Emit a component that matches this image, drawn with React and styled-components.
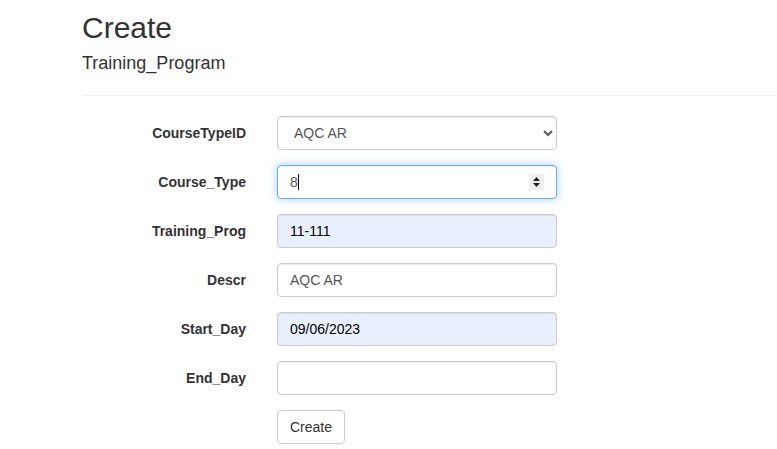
import styled, { createGlobalStyle, css } from "styled-components";

/* CSS */
const GlobalStyle = createGlobalStyle`
  html, body {
    margin: 0;
    padding: 0;
    background: #fff;
    overflow: hidden;
  }
  body {
    font-family: "Liberation Sans", Arial, Helvetica, sans-serif;
    font-size: 14px;
    line-height: 1.42857143;
    color: #333;
  }
`;

const Page = styled.div`
  padding-left: 82px;
`;

const Title = styled.h2`
  margin: 11px 0 0;
  font-size: 30px;
  font-weight: 500;
  line-height: 1.1;
`;

const SubTitle = styled.h4`
  margin: 10px 0 0;
  font-size: 18px;
  font-weight: 500;
  line-height: 1.1;
`;

const Rule = styled.hr`
  margin: 21px 0 20px;
  border: 0;
  border-top: 1px solid #eee;
`;

const Form = styled.form`
  display: flex;
  flex-direction: column;
  gap: 15px;
`;

const FormGroup = styled.div`
  display: grid;
  grid-template-columns: 164px 280px;
  column-gap: 31px;
  align-items: start;
`;

const Label = styled.label`
  padding-top: 7px;
  text-align: right;
  font-weight: bold;
`;

const fieldBase = css`
  box-sizing: border-box;
  display: block;
  width: 100%;
  height: 34px;
  padding: 6px 12px;
  font-family: inherit;
  font-size: 14px;
  line-height: 1.42857143;
  color: #555;
  background-color: #fff;
  border: 1px solid #ccc;
  border-radius: 4px;
  box-shadow: inset 0 1px 1px rgba(0, 0, 0, 0.075);
  outline: none;
`;

const Select = styled.select`
  ${fieldBase}
`;

const Input = styled.input`
  ${fieldBase}
  caret-color: transparent;
  ${(p) =>
    p.$autofill &&
    css`
      background-color: #e8f0fe;
      color: #000;
    `}
  ${(p) =>
    p.$focused &&
    css`
      border-color: #66afe9;
      box-shadow: inset 0 1px 1px rgba(0, 0, 0, 0.075),
        0 0 8px rgba(102, 175, 233, 0.6);
    `}
`;

const FieldWrap = styled.div`
  position: relative;
`;

const Caret = styled.span`
  position: absolute;
  left: 21px;
  top: 9px;
  width: 1px;
  height: 16px;
  background: #000;
`;

const Spinner = styled.span`
  position: absolute;
  right: 13px;
  top: 9px;
  width: 15px;
  height: 16px;
  background: #efefef;
  display: flex;
  align-items: center;
  justify-content: center;
`;

const Button = styled.button`
  justify-self: start;
  padding: 6px 12px;
  font-family: inherit;
  font-size: 14px;
  line-height: 1.42857143;
  color: #333;
  background-color: #fff;
  border: 1px solid #ccc;
  border-radius: 4px;
  cursor: pointer;
`;

const fields = [
  { label: "Training_Prog", value: "11-111", autofill: true },
  { label: "Descr", value: "AQC AR" },
  { label: "Start_Day", value: "09/06/2023", autofill: true },
  { label: "End_Day", value: "" },
];

export default function App() {
  return (
    <Page>
      <GlobalStyle />
      <Title>Create</Title>
      <SubTitle>Training_Program</SubTitle>
      <Rule />
      <Form onSubmit={(e) => e.preventDefault()}>
        <FormGroup>
          <Label>CourseTypeID</Label>
          <Select defaultValue="1">
            <option value="1">AQC AR</option>
          </Select>
        </FormGroup>
        <FormGroup>
          <Label>Course_Type</Label>
          <FieldWrap>
            <Input $focused type="text" defaultValue="8" />
            <Caret />
            <Spinner>
              <svg width="9" height="12" viewBox="0 0 9 12">
                <path d="M4.5 1 L8 5 H1 Z" fill="#222" />
                <path d="M4.5 11 L8 7 H1 Z" fill="#222" />
              </svg>
            </Spinner>
          </FieldWrap>
        </FormGroup>
        {fields.map((f) => (
          <FormGroup key={f.label}>
            <Label>{f.label}</Label>
            <Input type="text" $autofill={f.autofill} defaultValue={f.value} />
          </FormGroup>
        ))}
        <FormGroup>
          <span />
          <Button type="submit">Create</Button>
        </FormGroup>
      </Form>
    </Page>
  );
}
